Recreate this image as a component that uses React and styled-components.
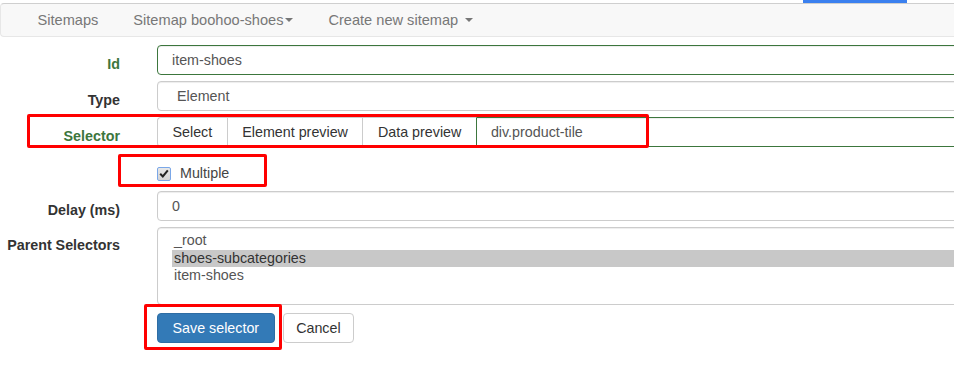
import React from "react";
import styled, { createGlobalStyle } from "styled-components";

const GlobalStyle = createGlobalStyle`
  html {
    overflow: hidden;
  }
  body {
    margin: 0;
    padding: 0;
    background: #fff;
    font-family: "Liberation Sans", Arial, sans-serif;
    font-size: 14.3px;
    color: #333;
  }
`;

const Page = styled.div`
  width: 1100px;
  min-height: 380px;
`;

const TopStrip = styled.div`
  height: 3px;
  display: flex;
`;

const ActiveTab = styled.div`
  margin-left: 803px;
  width: 104px;
  height: 3px;
  background: #3b80ef;
`;

const Navbar = styled.nav`
  height: 32px;
  display: flex;
  align-items: center;
  padding-left: 19px;
  background: #f8f8f8;
  border-top: 1px solid #cfcfcf;
  border-bottom: 1px solid #e7e7e7;
  border-left: 1px solid #e7e7e7;
  border-radius: 4px 0 0 4px;
`;

const NavLink = styled.a`
  padding: 0 17.5px;
  color: #777;
  font-size: 14.6px;
  line-height: 20px;
  display: flex;
  align-items: center;
  cursor: pointer;
`;

const Caret = styled.span`
  display: inline-block;
  width: 0;
  height: 0;
  margin-left: ${(p) => p.gap || 3}px;
  border-top: 4px solid #777;
  border-left: 4px solid transparent;
  border-right: 4px solid transparent;
`;

const Form = styled.form`
  margin-top: 8px;
  display: flex;
  flex-direction: column;
  gap: 6px;
`;

const Group = styled.div`
  position: relative;
  display: grid;
  grid-template-columns: 157px 1fr;
  min-height: ${(p) => p.minH || 30}px;
`;

const Label = styled.label`
  text-align: right;
  padding: ${(p) => p.top || 9}px 37px 0 0;
  line-height: 20px;
  font-weight: bold;
  color: ${(p) => (p.success ? "#3c763d" : "#333")};
`;

const Input = styled.div`
  height: 30px;
  box-sizing: border-box;
  padding: 0 ${(p) => p.padX || 14}px;
  display: flex;
  align-items: center;
  border: 1px solid ${(p) => (p.success ? "#3c763d" : "#ccc")};
  border-radius: ${(p) => (p.flatLeft ? "0 4px 4px 0" : "4px")};
  color: #555;
  background: #fff;
  box-shadow: inset 0 1px 1px rgba(0, 0, 0, 0.075);
  flex: 1;
`;

const InputGroup = styled.div`
  display: flex;
`;

const GroupButton = styled.button`
  height: 30px;
  padding: 0 14.5px;
  font-family: inherit;
  font-size: 14.3px;
  color: #333;
  background: #fff;
  border: 1px solid #ccc;
  border-right: none;
  border-radius: ${(p) => (p.first ? "4px 0 0 4px" : "0")};
`;

const CheckRow = styled.div`
  grid-column: 2;
  display: flex;
  align-items: center;
  gap: 9px;
  padding-top: 8px;
  color: #444;
`;

const CheckBox = styled.span`
  width: 14px;
  height: 14px;
  box-sizing: border-box;
  border: 1px solid #7aa7e8;
  border-radius: 2px;
  background: linear-gradient(#e8e8e8, #d4d4d4);
  display: flex;
  align-items: center;
  justify-content: center;
  margin-top: 1px;
`;

const ListBox = styled.div`
  height: 78px;
  box-sizing: border-box;
  border: 1px solid #ccc;
  border-radius: 4px;
  padding: 4px 0 0 14px;
  box-shadow: inset 0 1px 1px rgba(0, 0, 0, 0.075);
`;

const Option = styled.div`
  height: 17.5px;
  line-height: 17px;
  padding-left: 2px;
  color: ${(p) => (p.selected ? "#333" : "#555")};
  background: ${(p) => (p.selected ? "#c8c8c8" : "transparent")};
`;

const Actions = styled.div`
  position: relative;
  display: flex;
  gap: 8px;
  padding: 2px 0 0 157px;
`;

const Button = styled.button`
  height: 30px;
  padding: 0 ${(p) => (p.primary ? 14.5 : 12.5)}px;
  font-family: inherit;
  font-size: 14.3px;
  border-radius: 4px;
  border: 1px solid ${(p) => (p.primary ? "#2e6da4" : "#ccc")};
  background: ${(p) => (p.primary ? "#337ab7" : "#fff")};
  color: ${(p) => (p.primary ? "#fff" : "#333")};
`;

const Highlight = styled.div`
  position: absolute;
  left: ${(p) => p.x}px;
  top: ${(p) => p.y}px;
  width: ${(p) => p.w}px;
  height: ${(p) => p.h}px;
  box-sizing: border-box;
  border: 3px solid #ff0000;
  border-radius: 2px;
  pointer-events: none;
`;

export default function App() {
  return (
    <Page>
      <GlobalStyle />
      <TopStrip>
        <ActiveTab />
      </TopStrip>
      <Navbar>
        <NavLink>Sitemaps</NavLink>
        <NavLink>
          Sitemap boohoo-shoes
          <Caret gap={2} />
        </NavLink>
        <NavLink>
          Create new sitemap
          <Caret gap={7} />
        </NavLink>
      </Navbar>

      <Form>
        <Group>
          <Label success>Id</Label>
          <Input success>item-shoes</Input>
        </Group>

        <Group>
          <Label>Type</Label>
          <Input padX={19}>Element</Input>
        </Group>

        <Group>
          <Label success>Selector</Label>
          <InputGroup>
            <GroupButton first>Select</GroupButton>
            <GroupButton>Element preview</GroupButton>
            <GroupButton>Data preview</GroupButton>
            <Input success flatLeft>
              div.product-tile
            </Input>
          </InputGroup>
          <Highlight x={27} y={-3} w={622} h={34} />
        </Group>

        <Group minH={32}>
          <CheckRow>
            <CheckBox>
              <svg width="10" height="9" viewBox="0 0 10 9">
                <path
                  d="M1.2 4.8 L3.8 7.4 L8.8 1.4"
                  fill="none"
                  stroke="#222"
                  strokeWidth="2"
                />
              </svg>
            </CheckBox>
            Multiple
          </CheckRow>
          <Highlight x={118} y={1} w={149} h={33} />
        </Group>

        <Group>
          <Label>Delay (ms)</Label>
          <Input>0</Input>
        </Group>

        <Group>
          <Label top={8}>Parent Selectors</Label>
          <ListBox>
            <Option>_root</Option>
            <Option selected>shoes-subcategories</Option>
            <Option>item-shoes</Option>
          </ListBox>
        </Group>

        <Actions>
          <Button primary>Save selector</Button>
          <Button>Cancel</Button>
          <Highlight x={144} y={-7} w={138} h={46} />
        </Actions>
      </Form>
    </Page>
  );
}
